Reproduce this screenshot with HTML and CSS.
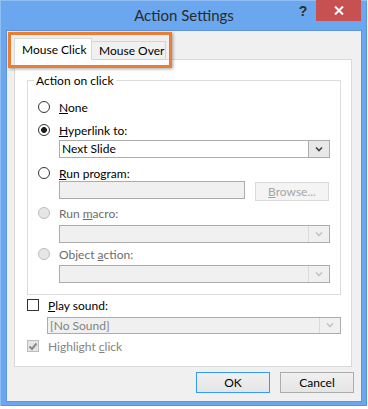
FILE: index.html
```html
<!DOCTYPE html>
<html lang="en">
<head>
    <meta charset="UTF-8">
    <meta name="viewport" content="width=device-width, initial-scale=1.0">
    <title>Action Settings</title>
    <link rel="stylesheet" href="styles.css">
</head>
<body>
    <div class="window">
        <div class="titlebar">
            <span></span>
            <div class="title">Action Settings</div>
            <div class="controls">
                <span class="help">?</span>
                <span class="close">
                    <svg width="10" height="9" viewBox="0 0 10 9"><path d="M1 0.5 L9 8.5 M9 0.5 L1 8.5" stroke="#fff" stroke-width="2"/></svg>
                </span>
            </div>
        </div>

        <div class="client">
            <div class="tabs">
                <div class="tab active">Mouse Click</div>
                <div class="tab">Mouse Over</div>
            </div>
            <div class="highlight"></div>

            <div class="panel">
                <div class="group">
                    <span class="legend">Action on click</span>

                    <label class="row r-none"><span class="radio"></span><span><u>N</u>one</span></label>
                    <label class="row r-link"><span class="radio checked"></span><span><u>H</u>yperlink to:</span></label>
                    <div class="select s-link">
                        <span class="value">Next Slide</span>
                        <span class="arrow"><svg width="8" height="5" viewBox="0 0 8 5"><path d="M1 0.5 L4 3.5 L7 0.5" fill="none" stroke="#444" stroke-width="1.6"/></svg></span>
                    </div>
                    <label class="row r-prog"><span class="radio"></span><span><u>R</u>un program:</span></label>
                    <div class="prog-row">
                        <div class="input"></div>
                        <div class="browse"><u>B</u>rowse...</div>
                    </div>
                    <label class="row r-macro disabled"><span class="radio"></span><span>Run <u>m</u>acro:</span></label>
                    <div class="select off s-macro">
                        <span class="value"></span>
                        <span class="arrow"><svg width="8" height="5" viewBox="0 0 8 5"><path d="M1 0.5 L4 3.5 L7 0.5" fill="none" stroke="#c4c4c4" stroke-width="1.6"/></svg></span>
                    </div>
                    <label class="row r-obj disabled"><span class="radio"></span><span>Object <u>a</u>ction:</span></label>
                    <div class="select off s-obj">
                        <span class="value"></span>
                        <span class="arrow"><svg width="8" height="5" viewBox="0 0 8 5"><path d="M1 0.5 L4 3.5 L7 0.5" fill="none" stroke="#c4c4c4" stroke-width="1.6"/></svg></span>
                    </div>
                </div>

                <label class="check-row c-sound"><span class="checkbox"></span><span><u>P</u>lay sound:</span></label>
                <div class="select off s-sound">
                    <span class="value">[No Sound]</span>
                    <span class="arrow"><svg width="8" height="5" viewBox="0 0 8 5"><path d="M1 0.5 L4 3.5 L7 0.5" fill="none" stroke="#c4c4c4" stroke-width="1.6"/></svg></span>
                </div>
                <label class="check-row c-high disabled">
                    <span class="checkbox checked">
                        <svg width="10" height="9" viewBox="0 0 10 9"><path d="M1.5 4.5 L4 7 L8.5 1.5" fill="none" stroke="#8a8a8a" stroke-width="2"/></svg>
                    </span>
                    <span>Highlight <u>c</u>lick</span>
                </label>
            </div>

            <div class="buttons">
                <button class="btn default">OK</button>
                <button class="btn">Cancel</button>
            </div>
        </div>
    </div>
</body>
</html>
```

FILE: styles.css
```css
body {
    margin: 0;
    background-color: #fff;
    font-family: Lato, "Liberation Sans", sans-serif;
    font-size: 12px;
    color: #000;
}

.window {
    width: 367px;
    height: 406px;
    box-sizing: border-box;
    padding: 0 6px 5px 7px;
    background-color: #6aa7ef;
    box-shadow: inset 1px 1px 0 #8fbdf4, inset -1px -1px 0 #5a93dc;
}

/* title bar */
.titlebar {
    height: 31px;
    display: grid;
    grid-template-columns: 1fr auto 1fr;
}

.title {
    line-height: 31px;
    font-size: 15px;
    color: #2b2b2b;
}

.controls {
    display: flex;
    justify-content: flex-end;
    align-items: flex-start;
}

.help {
    width: 26px;
    height: 21px;
    line-height: 22px;
    text-align: center;
    font-family: "Liberation Sans", sans-serif;
    font-weight: bold;
    font-size: 14px;
    color: #2d2d2d;
}

.close {
    width: 45px;
    height: 21px;
    background-color: #c75050;
    display: flex;
    align-items: center;
    justify-content: center;
}

/* client area */
.client {
    position: relative;
    height: 370px;
    box-sizing: border-box;
    padding: 7px 7px 0 7px;
    background-color: #f0f0f0;
    box-shadow: 0 0 0 1px #5e95dc;
}

.tabs {
    display: flex;
    align-items: flex-end;
    height: 22px;
    position: relative;
    z-index: 1;
}

.tab {
    box-sizing: border-box;
    height: 19px;
    width: 75px;
    margin-left: -1px;
    padding-left: 7px;
    line-height: 18px;
    background-color: #f0f0f0;
    border: 1px solid #d4d4d4;
}

.tab.active {
    height: 22px;
    width: 78px;
    margin-left: 0;
    line-height: 21px;
    background-color: #fff;
    border-color: #d9d9d9;
    border-bottom: none;
    position: relative;
    z-index: 2;
}

.highlight {
    position: absolute;
    left: 1px;
    top: 1px;
    width: 164px;
    height: 36px;
    box-sizing: border-box;
    border: 3px solid #ed7d31;
    box-shadow: 1px 1px 3px rgba(0, 0, 0, 0.35);
    z-index: 3;
}

.panel {
    margin-top: -1px;
    width: 338px;
    box-sizing: border-box;
    padding: 0 10px 12px 12px;
    background-color: #fff;
    border: 1px solid #d9d9d9;
}

.group {
    margin-top: 20px;
    width: 314px;
    box-sizing: border-box;
    padding-bottom: 11px;
    border: 1px solid #dcdcdc;
}

.legend {
    display: block;
    width: fit-content;
    margin: -8px 0 0 6px;
    padding: 0 2px;
    line-height: 16px;
    background-color: #fff;
}

.row {
    display: flex;
    align-items: center;
    gap: 9px;
    height: 16px;
    padding-left: 10px;
}

.r-none { margin-top: 10px; }
.r-link { margin-top: 7px; }
.r-prog { margin-top: 7px; }
.r-macro { margin-top: 4px; }
.r-obj { margin-top: 3px; }

.disabled {
    color: #6d6d6d;
}

.radio {
    width: 12px;
    height: 12px;
    box-sizing: border-box;
    border-radius: 50%;
    border: 1px solid #333;
    background-color: #fff;
}

.radio.checked {
    background: radial-gradient(circle, #1e1e1e 0 2.6px, #fff 3.2px);
}

.disabled .radio {
    border-color: #bcbcbc;
    background-color: #e6e6e6;
}

.select {
    display: flex;
    height: 18px;
    width: 271px;
    margin-left: 31px;
    box-sizing: border-box;
    border: 1px solid #acacac;
    background-color: #fff;
}

.select .value {
    flex: 1;
    padding-left: 2px;
    line-height: 16px;
}

.select .arrow {
    width: 20px;
    border-left: 1px solid #acacac;
    background-color: #e8e8e8;
    display: flex;
    align-items: center;
    justify-content: center;
}

.select.off {
    background-color: #f0f0f0;
}

.select.off .value {
    color: #838383;
}

.select.off .arrow {
    background-color: #f0f0f0;
    border-left-color: #dadada;
}

.s-link { margin-top: 2px; }
.s-macro { margin-top: 4px; }
.s-obj { margin-top: 3px; }

.prog-row {
    display: flex;
    align-items: flex-start;
    gap: 10px;
    height: 20px;
    margin-left: 31px;
}

.input {
    width: 186px;
    height: 18px;
    box-sizing: border-box;
    border: 1px solid #acacac;
    background-color: #f0f0f0;
}

.browse {
    width: 74px;
    height: 19px;
    margin-top: 1px;
    box-sizing: border-box;
    border: 1px solid #d9d9d9;
    background-color: #f4f4f4;
    color: #a6a6a6;
    text-align: center;
    line-height: 17px;
}

.check-row {
    display: flex;
    align-items: center;
    gap: 9px;
    height: 16px;
}

.c-sound { margin-top: 2px; }
.c-high { margin-top: 4px; color: #838383; }

.checkbox {
    width: 12px;
    height: 12px;
    box-sizing: border-box;
    border: 1px solid #333;
    background-color: #fff;
    display: flex;
    align-items: center;
    justify-content: center;
}

.checkbox.checked {
    border-color: #bcbcbc;
    background-color: #e6e6e6;
}

.s-sound {
    margin-top: 4px;
    margin-left: 20px;
    width: 294px;
    height: 17px;
}

.s-sound .value {
    line-height: 15px;
}

/* bottom buttons */
.buttons {
    display: flex;
    justify-content: flex-end;
    gap: 10px;
    margin-top: 5px;
}

.btn {
    width: 74px;
    height: 21px;
    padding: 0;
    font-family: Lato, "Liberation Sans", sans-serif;
    font-size: 12px;
    color: #000;
    background: linear-gradient(#f0f0f0, #e5e5e5);
    border: 1px solid #acacac;
}

.btn.default {
    border-color: #3399ff;
}
```
